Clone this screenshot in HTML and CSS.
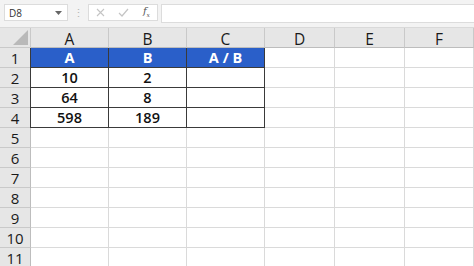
FILE: index.html
```html
<!DOCTYPE html>
<html lang="en">
<head>
    <meta charset="UTF-8">
    <title>Book1</title>
    <link rel="stylesheet" href="styles.css">
</head>
<body>
    <div class="toolbar">
        <div class="name-box">
            <span>D8</span>
            <svg class="caret" width="7" height="4" viewBox="0 0 7 4"><path d="M0 0h7L3.5 4z" fill="#666"/></svg>
        </div>
        <div class="grip">⋮</div>
        <div class="fx-buttons">
            <svg width="9" height="9" viewBox="0 0 9 9"><path d="M1 1l7 7M8 1L1 8" stroke="#c4c4c4" stroke-width="1.1"/></svg>
            <svg width="11" height="9" viewBox="0 0 11 9"><path d="M1 5l3 3 6-7" stroke="#c4c4c4" stroke-width="1.2" fill="none"/></svg>
            <span class="fx">f<sub>x</sub></span>
        </div>
        <div class="formula"></div>
    </div>

    <div class="sheet">
        <!-- cabecera de columnas -->
        <div class="corner"><div class="tri"></div></div>
        <div class="col">A</div>
        <div class="col">B</div>
        <div class="col">C</div>
        <div class="col">D</div>
        <div class="col">E</div>
        <div class="col">F</div>

        <div class="num">1</div>
        <div class="cell t head first">A</div>
        <div class="cell t head">B</div>
        <div class="cell t head">A / B</div>
        <div class="cell"></div><div class="cell"></div><div class="cell"></div>

        <div class="num">2</div>
        <div class="cell t first">10</div>
        <div class="cell t">2</div>
        <div class="cell t"></div>
        <div class="cell"></div><div class="cell"></div><div class="cell"></div>

        <div class="num">3</div>
        <div class="cell t first">64</div>
        <div class="cell t">8</div>
        <div class="cell t"></div>
        <div class="cell"></div><div class="cell"></div><div class="cell"></div>

        <div class="num">4</div>
        <div class="cell t first">598</div>
        <div class="cell t">189</div>
        <div class="cell t"></div>
        <div class="cell"></div><div class="cell"></div><div class="cell"></div>

        <div class="num">5</div>
        <div class="cell"></div><div class="cell"></div><div class="cell"></div><div class="cell"></div><div class="cell"></div><div class="cell"></div>
        <div class="num">6</div>
        <div class="cell"></div><div class="cell"></div><div class="cell"></div><div class="cell"></div><div class="cell"></div><div class="cell"></div>
        <div class="num">7</div>
        <div class="cell"></div><div class="cell"></div><div class="cell"></div><div class="cell"></div><div class="cell"></div><div class="cell"></div>
        <div class="num">8</div>
        <div class="cell"></div><div class="cell"></div><div class="cell"></div><div class="cell"></div><div class="cell"></div><div class="cell"></div>
        <div class="num">9</div>
        <div class="cell"></div><div class="cell"></div><div class="cell"></div><div class="cell"></div><div class="cell"></div><div class="cell"></div>
        <div class="num">10</div>
        <div class="cell"></div><div class="cell"></div><div class="cell"></div><div class="cell"></div><div class="cell"></div><div class="cell"></div>
        <div class="num">11</div>
        <div class="cell"></div><div class="cell"></div><div class="cell"></div><div class="cell"></div><div class="cell"></div><div class="cell"></div>
    </div>
</body>
</html>
```

FILE: styles.css
```css
body {
    margin: 0;
    width: 474px;
    height: 266px;
    overflow: hidden;
    background-color: #ffffff;
    font-family: "Open Sans", "Noto Sans", sans-serif;
}
.toolbar {
    height: 28px;
    box-sizing: border-box;
    display: flex;
    align-items: flex-start;
    padding: 4px 0 0 4px;
    background-color: #f3f3f3;
    border-bottom: 1px solid #d9d9d9;
}
.name-box {
    width: 64px;
    height: 17px;
    box-sizing: border-box;
    display: flex;
    align-items: center;
    justify-content: space-between;
    padding: 0 5px 0 4px;
    background-color: #ffffff;
    border: 1px solid #dcdcdc;
    font-size: 10px;
    color: #333;
}
.grip {
    width: 20px;
    text-align: center;
    font-size: 11px;
    line-height: 17px;
    color: #b5b5b5;
}
.fx-buttons {
    width: 70px;
    height: 17px;
    box-sizing: border-box;
    display: flex;
    align-items: center;
    justify-content: space-between;
    padding: 0 7px 0 7px;
    background-color: #ffffff;
    border: 1px solid #dcdcdc;
}
.fx {
    font-family: "DejaVu Serif", serif;
    font-style: italic;
    font-size: 10px;
    color: #555;
    line-height: 10px;
}
.fx sub {
    font-size: 6px;
}
.formula {
    flex: 1;
    height: 17px;
    margin-left: 3px;
    background-color: #ffffff;
    border: 1px solid #dcdcdc;
    border-right: none;
}
.sheet {
    display: grid;
    grid-template-columns: 31px 78px 78px 78px 70px 70px 69px;
    grid-auto-rows: 20px;
}
.corner, .col, .num, .cell {
    box-sizing: border-box;
    display: flex;
    align-items: center;
    justify-content: center;
}
.corner {
    background-color: #e6e6e6;
    border-right: 1px solid #c9c9c9;
    border-bottom: 1px solid #c9c9c9;
    align-items: flex-end;
    justify-content: flex-end;
    padding: 0 2px 2px 0;
}
.tri {
    width: 0;
    height: 0;
    border-left: 15px solid transparent;
    border-bottom: 15px solid #b9b9b9;
}
.col {
    background-color: #e6e6e6;
    border-right: 1px solid #c9c9c9;
    border-bottom: 1px solid #bdbdbd;
    font-size: 15.5px;
    color: #1a1a1a;
    padding-top: 2px;
}
.num {
    background-color: #e6e6e6;
    border-right: 1px solid #bdbdbd;
    border-bottom: 1px solid #c9c9c9;
    font-size: 15px;
    color: #1a1a1a;
}
.cell {
    border-right: 1px solid #dadada;
    border-bottom: 1px solid #dadada;
    font-size: 14.5px;
    font-weight: 600;
    color: #111;
}
.t {
    border-right-color: #3a3a3a;
    border-bottom-color: #3a3a3a;
}
.first {
    box-shadow: -1px 0 0 #3a3a3a;
}
.head {
    background-color: #2a5fc9;
    color: #ffffff;
    font-weight: bold;
}
```
